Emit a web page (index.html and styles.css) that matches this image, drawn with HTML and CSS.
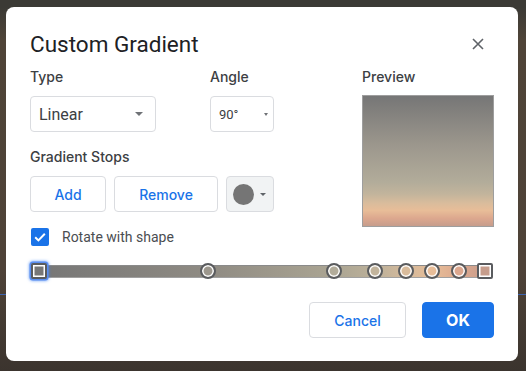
FILE: index.html
```html
<!DOCTYPE html>
<html>
<head>
<meta charset="utf-8">
<link rel="stylesheet" href="styles.css">
</head>
<body>
<div class="dialog">
  <div class="header">
    <div class="title">Custom Gradient</div>
    <button class="close" aria-label="Close">
      <svg width="12" height="12" viewBox="0 0 12 12"><path d="M1 1 L11 11 M11 1 L1 11" stroke="#5f6368" stroke-width="1.6" fill="none"/></svg>
    </button>
  </div>
  <div class="body">
    <div class="left">
      <div class="fields">
        <div class="field type">
          <div class="label">Type</div>
          <div class="select sel-type"><span>Linear</span><i class="caret"></i></div>
        </div>
        <div class="field angle">
          <div class="label">Angle</div>
          <div class="select sel-angle"><span>90°</span><i class="caret small"></i></div>
        </div>
      </div>
      <div class="label stops-label">Gradient Stops</div>
      <div class="btns">
        <button class="btn add">Add</button>
        <button class="btn remove">Remove</button>
        <button class="colorbtn"><span class="swatch"></span><i class="caret mid"></i></button>
      </div>
    </div>
    <div class="right">
      <div class="label">Preview</div>
      <div class="preview"></div>
    </div>
  </div>
  <div class="check-row">
    <span class="checkbox">
      <svg width="18" height="18" viewBox="0 0 18 18"><path d="M4.2 9.3 L7.4 12.4 L13.8 5.8" stroke="#fff" stroke-width="2" fill="none"/></svg>
    </span>
    <span class="check-text">Rotate with shape</span>
  </div>
  <div class="slider">
    <div class="track"></div>
    <div class="stops">
      <span class="stop sq focus" style="left:0%;background-color:#777777"></span>
      <span class="stop" style="left:37.9%;background-color:#9c978d"></span>
      <span class="stop" style="left:66.1%;background-color:#b2ac9a"></span>
      <span class="stop" style="left:75.3%;background-color:#c2b49c"></span>
      <span class="stop" style="left:82.3%;background-color:#d9bc9c"></span>
      <span class="stop" style="left:88.1%;background-color:#e8bd98"></span>
      <span class="stop" style="left:94.2%;background-color:#dca78e"></span>
      <span class="stop sq" style="left:100%;background-color:#c69d8c"></span>
    </div>
  </div>
  <div class="footer">
    <button class="btn cancel">Cancel</button>
    <button class="btn ok">OK</button>
  </div>
</div>
</body>
</html>
```

FILE: styles.css
```css
* { box-sizing: border-box; }
html, body { margin: 0; height: 100%; }
body {
  width: 526px;
  height: 371px;
  overflow: hidden;
  padding: 7px 8px 10px 6px;
  font-family: Roboto, "Liberation Sans", sans-serif;
  color: #3c4043;
  background:
    linear-gradient(to bottom, transparent 294px, #3d63b0 294px, #3d63b0 295px, transparent 295px),
    linear-gradient(to bottom, #3b3a35 0, #3b3a35 7px, #4f4438 40px, #4e4238 270px, #3b342e 371px);
}
.dialog {
  width: 512px;
  height: 354px;
  background: #fff;
  border-radius: 8px;
  padding: 23px 24px 23px 24px;
  display: flex;
  flex-direction: column;
}
.header {
  display: flex;
  align-items: center;
  justify-content: space-between;
  height: 28px;
}
.title {
  font-size: 22.5px;
  line-height: 28px;
  color: #202124;
}
.close {
  width: 24px;
  height: 24px;
  margin-right: 4px;
  border: 0;
  padding: 0;
  background: transparent;
  display: flex;
  align-items: center;
  justify-content: center;
}
.body {
  display: grid;
  grid-template-columns: 1fr 132px;
  margin-top: 9px;
}
.label {
  font-family: Inter, Roboto, sans-serif;
  font-size: 14px;
  font-weight: 500;
  line-height: 20px;
  color: #3c4043;
}
.fields { display: flex; }
.field.type { width: 126px; margin-right: 54px; }
.field.angle { width: 64px; }
.select {
  margin-top: 9px;
  height: 36px;
  border: 1px solid #dadce0;
  border-radius: 4px;
  display: flex;
  align-items: center;
  justify-content: space-between;
  padding: 0 12px 0 8px;
  color: #3c4043;
}
.sel-type { font-size: 16px; }
.sel-angle { font-size: 13px; padding-right: 5px; }
.caret {
  width: 0; height: 0;
  border-left: 4px solid transparent;
  border-right: 4px solid transparent;
  border-top: 4px solid #6f7276;
}
.caret.small {
  border-left-width: 2.5px;
  border-right-width: 2.5px;
  border-top-width: 3px;
}
.caret.mid {
  border-left-width: 3.5px;
  border-right-width: 3.5px;
  border-top-width: 3.5px;
  border-top-color: #5f6368;
}
.stops-label { margin-top: 15px; }
.btns {
  display: flex;
  gap: 8px;
  margin-top: 9px;
}
.btn {
  height: 36px;
  border: 1px solid #dadce0;
  border-radius: 4px;
  background: #fff;
  font-family: Inter, Roboto, sans-serif;
  font-size: 14px;
  font-weight: 500;
  color: #1a73e8;
  padding: 0;
}
.add { width: 76px; }
.remove { width: 104px; }
.colorbtn {
  width: 48px;
  height: 36px;
  border: 1px solid #dadce0;
  border-radius: 4px;
  background: #f1f3f4;
  display: flex;
  align-items: center;
  gap: 6px;
  padding: 0 0 0 6px;
}
.swatch {
  width: 21px;
  height: 21px;
  border-radius: 50%;
  background: #757575;
}
.right .preview {
  margin-top: 8px;
  width: 132px;
  height: 132px;
  border: 1px solid #9e9e9e;
  background: linear-gradient(to bottom,
    #767676 0%, #9c978d 37.9%, #b2ac9a 66.1%, #c2b49c 75.3%,
    #d9bc9c 82.3%, #e8bd98 88.1%, #dca78e 94.2%, #c69d8c 100%);
}
.check-row {
  display: flex;
  align-items: center;
  height: 20px;
}
.checkbox {
  width: 18px;
  height: 18px;
  margin-left: 1px;
  border-radius: 2px;
  background: #1a73e8;
  display: flex;
}
.check-text {
  margin-left: 13px;
  font-size: 14px;
  line-height: 20px;
  color: #4a4d51;
}
.slider {
  position: relative;
  height: 16px;
  margin-top: 16px;
  display: flex;
  align-items: center;
}
.track {
  flex: 1;
  height: 13px;
  margin: 0 6px 0 8px;
  border-top: 1px solid #8a8a8a;
  border-bottom: 1px solid #a0a0a0;
  background: linear-gradient(to right,
    #767676 0%, #8f8b83 37.9%, #aba593 66.1%, #bdb19a 75.3%,
    #d6ba9b 82.3%, #e6bc97 88.1%, #dba78e 94.2%, #c69d8c 100%);
}
.stops {
  position: absolute;
  top: 0;
  bottom: 0;
  left: 9px;
  right: 9px;
}
.stop {
  position: absolute;
  top: 0;
  width: 16px;
  height: 16px;
  margin-left: -8px;
  border-radius: 50%;
  border: 2px solid #5a5c5f;
  box-shadow: inset 0 0 0 1.5px #fff;
}
.stop.sq { border-radius: 2px; }
.stop.focus {
  box-shadow: inset 0 0 0 1.5px #fff, 0 0 0 1.5px #5a8ef0, 0 0 3px 2px rgba(66,133,244,0.7);
}
.footer {
  display: flex;
  justify-content: flex-end;
  gap: 16px;
  margin-top: 23px;
}
.cancel { width: 97px; }
.ok {
  width: 72px;
  background: #1a73e8;
  border-color: #1a73e8;
  color: #fff;
  font-size: 16px;
  font-weight: 700;
}
```
